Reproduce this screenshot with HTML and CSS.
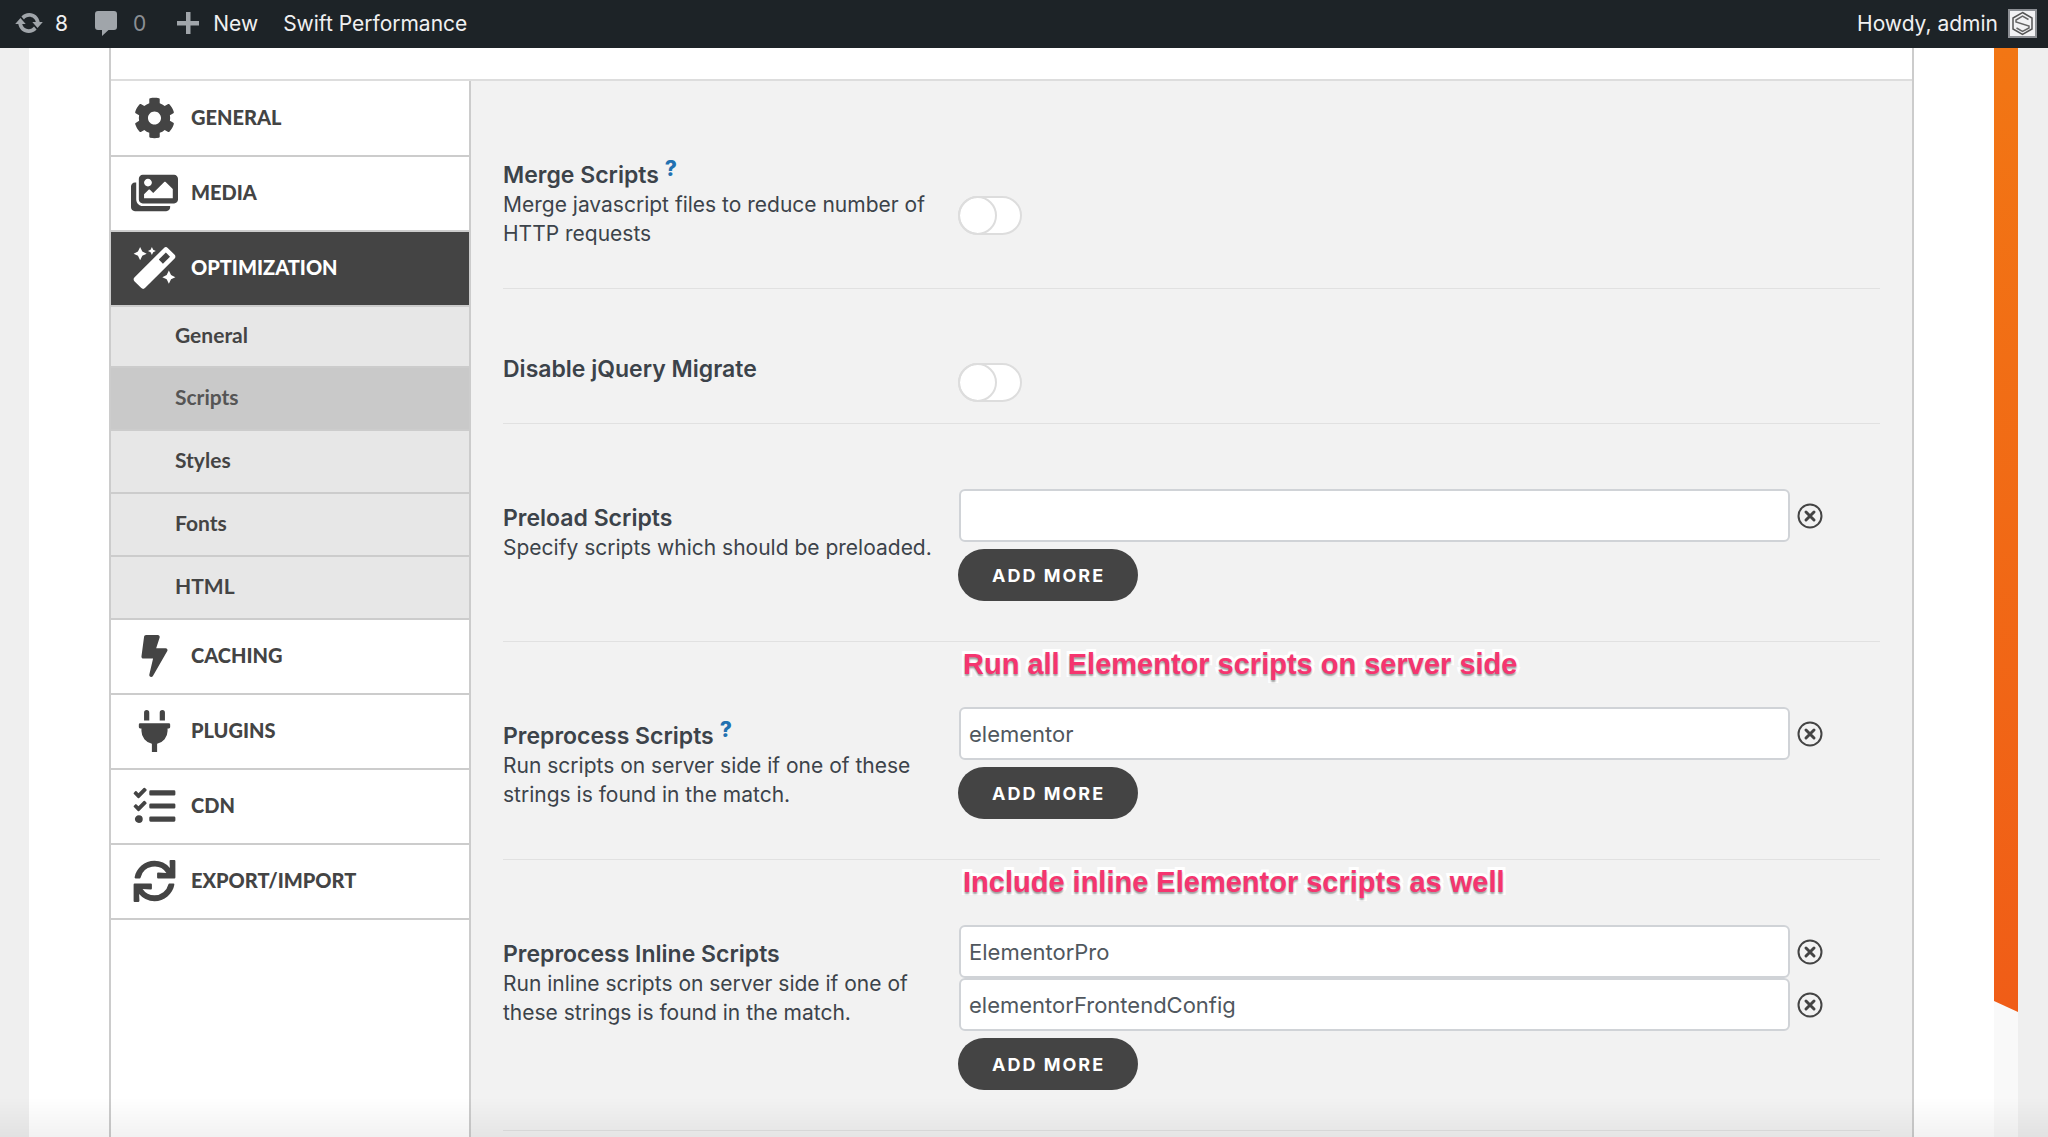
FILE: index.html
```html
<!DOCTYPE html>
<html lang="en">
<head>
    <meta charset="UTF-8">
    <meta name="viewport" content="width=device-width, initial-scale=1.0">
    <title>Swift Performance</title>
    <link rel="stylesheet" href="styles.css">
</head>
<body>
    <header class="adminbar">
        <a href="#" class="ab-item">
            <svg class="ab-icon" width="30" height="30" viewBox="0 0 20 20"><path d="M10.2 3.28c3.53 0 6.43 2.61 6.92 6h2.08l-3.5 4-3.5-4h2.32c-.45-1.97-2.21-3.45-4.32-3.45-1.45 0-2.73.71-3.54 1.78L4.95 5.66C6.23 4.2 8.11 3.28 10.2 3.28zm-.4 13.44c-3.52 0-6.43-2.61-6.92-6H.8l3.5-4c1.17 1.33 2.33 2.67 3.5 4H5.48c.45 1.97 2.21 3.45 4.32 3.45 1.45 0 2.73-.71 3.54-1.78l1.71 1.95c-1.28 1.46-3.15 2.38-5.25 2.38z"/></svg>
            <span>8</span>
        </a>
        <a href="#" class="ab-item ab-comments">
            <svg class="ab-icon" width="22" height="25" viewBox="0 0 22 25"><path d="M3 0h16a3 3 0 0 1 3 3v13a3 3 0 0 1-3 3h-5.500l-6.500 6v-6H3a3 3 0 0 1-3-3V3a3 3 0 0 1 3-3z"/></svg>
            <span>0</span>
        </a>
        <a href="#" class="ab-item ab-new">
            <svg class="ab-icon" width="22" height="22" viewBox="0 0 22 22"><path d="M9 0h4.500v9H22v4.500h-8.500V22H9v-8.500H0V9h9z"/></svg>
            <span>New</span>
        </a>
        <a href="#" class="ab-item">Swift Performance</a>
        <a href="#" class="ab-item ab-account">
            <span>Howdy, admin</span>
            <svg class="avatar" width="29" height="29" viewBox="0 0 29 29">
                <rect x="1" y="1" width="27" height="27" fill="#f2f2f4" stroke="#8c8f94" stroke-width="2"/>
                <path d="M14.500 3.500l9.500 5.500v11l-9.500 5.500L5 20V9z" fill="none" stroke="#555" stroke-width="1.500"/>
                <path d="M20.500 10.500l-6-3.500-6.500 4v2l13 4v2l-6.500 3.500-6-3.500" fill="none" stroke="#666" stroke-width="1.500"/>
            </svg>
        </a>
    </header>

    <div class="wrap">
        <div class="panel">
            <div class="panel-top"></div>
            <div class="panel-body">
                <nav class="sidebar">
                    <a href="#" class="menu-item">
                        <svg viewBox="-32 0 576 512"><path d="M487.400 315.700l-42.600-24.600c4.300-23.200 4.300-47 0-70.200l42.600-24.600c4.900-2.800 7.100-8.600 5.500-14-11.100-35.600-30-67.800-54.700-94.600-3.800-4.100-10-5.100-14.800-2.300L380.800 110c-17.900-15.400-38.500-27.300-60.800-35.100V25.800c0-5.600-3.900-10.500-9.400-11.700-36.700-8.200-74.300-7.800-109.200 0-5.500 1.200-9.400 6.100-9.400 11.700V75c-22.200 7.900-42.800 19.800-60.800 35.100L88.700 85.500c-4.900-2.800-11-1.900-14.800 2.300-24.700 26.700-43.600 58.900-54.700 94.600-1.700 5.400.6 11.200 5.500 14L67.300 221c-4.300 23.200-4.300 47 0 70.200l-42.600 24.600c-4.900 2.800-7.100 8.600-5.500 14 11.100 35.600 30 67.800 54.700 94.600 3.800 4.100 10 5.100 14.800 2.300l42.600-24.600c17.900 15.400 38.500 27.300 60.800 35.100v49.200c0 5.600 3.900 10.500 9.400 11.700 36.700 8.200 74.300 7.800 109.200 0 5.500-1.200 9.400-6.100 9.400-11.700v-49.200c22.200-7.900 42.800-19.800 60.800-35.100l42.600 24.600c4.900 2.800 11 1.900 14.800-2.300 24.700-26.700 43.600-58.900 54.700-94.600 1.500-5.500-.7-11.300-5.600-14.100zM256 336c-44.100 0-80-35.900-80-80s35.900-80 80-80 80 35.900 80 80-35.900 80-80 80z"/></svg>
                        General
                    </a>
                    <a href="#" class="menu-item">
                        <svg viewBox="0 0 576 512"><path d="M480 416v16c0 26.510-21.490 48-48 48H48c-26.510 0-48-21.490-48-48V176c0-26.510 21.490-48 48-48h16v208c0 44.112 35.888 80 80 80h336zm96-80V80c0-26.510-21.490-48-48-48H144c-26.510 0-48 21.490-48 48v256c0 26.510 21.490 48 48 48h384c26.510 0 48-21.490 48-48zM256 128c0 26.510-21.490 48-48 48s-48-21.490-48-48 21.490-48 48-48 48 21.490 48 48zm-96 144l55.515-55.515c4.686-4.686 12.284-4.686 16.971 0L272 256l135.515-135.515c4.686-4.686 12.284-4.686 16.971 0L512 208v112H160v-48z"/></svg>
                        Media
                    </a>
                    <a href="#" class="menu-item active">
                        <svg viewBox="-32 0 576 512"><path d="M224 96l16-32 32-16-32-16-16-32-16 32-32 16 32 16 16 32zM80 160l26.660-53.330L160 80l-53.340-26.670L80 0 53.340 53.330 0 80l53.340 26.670L80 160zm352 128l-26.660 53.330L352 368l53.340 26.670L432 448l26.660-53.330L512 368l-53.340-26.670L432 288zm70.620-193.770L417.770 9.380C411.530 3.120 403.340 0 395.150 0c-8.190 0-16.380 3.120-22.630 9.380L9.380 372.520c-12.500 12.500-12.500 32.760 0 45.250l84.850 84.850c6.250 6.250 14.440 9.370 22.620 9.370 8.190 0 16.380-3.120 22.630-9.370l363.140-363.150c12.500-12.480 12.500-32.750 0-45.240zM359.450 203.460l-50.910-50.910 86.600-86.600 50.910 50.910-86.600 86.600z"/></svg>
                        Optimization
                    </a>
                    <div class="submenu">
                        <a href="#">General</a>
                        <a href="#" class="current">Scripts</a>
                        <a href="#">Styles</a>
                        <a href="#">Fonts</a>
                        <a href="#">HTML</a>
                    </div>
                    <a href="#" class="menu-item">
                        <svg viewBox="-128 0 576 512"><path d="M296 160H180.600l42.600-129.800C227.200 15 215.700 0 200 0H56C44 0 33.800 8.900 32.200 20.800l-32 240C-1.700 275.200 9.500 288 24 288h118.700L96.600 482.500c-3.600 15.200 8 29.500 23.300 29.500 8.400 0 16.400-4.400 20.800-12l176-304c9.300-15.900-2.200-36-20.700-36z"/></svg>
                        Caching
                    </a>
                    <a href="#" class="menu-item">
                        <svg viewBox="-96 0 576 512"><path d="M320 32a32 32 0 0 0-64 0v96h64zm48 128H16A16 16 0 0 0 0 176v32a16 16 0 0 0 16 16h16v32a160.070 160.070 0 0 0 128 156.800V512h64V412.800A160.070 160.070 0 0 0 352 256V224h16a16 16 0 0 0 16-16V176A16 16 0 0 0 368 160zM128 32a32 32 0 0 0-64 0v96h64z"/></svg>
                        Plugins
                    </a>
                    <a href="#" class="menu-item">
                        <svg viewBox="-32 0 576 512"><path d="M139.610 35.500a12 12 0 0 0-17 0L58.930 98.810l-22.700-22.120a12 12 0 0 0-17 0L3.530 92.410a12 12 0 0 0 0 17l47.590 47.400a12.780 12.780 0 0 0 17.610 0l15.590-15.620L156.520 69a12.090 12.090 0 0 0 .09-17zm0 159.190a12 12 0 0 0-17 0l-63.680 63.720-22.700-22.100a12 12 0 0 0-17 0L3.530 252a12 12 0 0 0 0 17L51 316.500a12.770 12.770 0 0 0 17.600 0l15.700-15.690 72.200-72.220a12 12 0 0 0 .09-16.900zM64 368c-26.490 0-48.590 21.500-48.590 48S37.530 464 64 464a48 48 0 0 0 0-96zm432 16H208a16 16 0 0 0-16 16v32a16 16 0 0 0 16 16h288a16 16 0 0 0 16-16v-32a16 16 0 0 0-16-16zm0-320H208a16 16 0 0 0-16 16v32a16 16 0 0 0 16 16h288a16 16 0 0 0 16-16V80a16 16 0 0 0-16-16zm0 160H208a16 16 0 0 0-16 16v32a16 16 0 0 0 16 16h288a16 16 0 0 0 16-16v-32a16 16 0 0 0-16-16z"/></svg>
                        CDN
                    </a>
                    <a href="#" class="menu-item">
                        <svg viewBox="-32 0 576 512"><path d="M440.650 12.570l4 82.770A247.160 247.160 0 0 0 255.830 8C134.730 8 33.910 94.920 12.290 209.820A12 12 0 0 0 24.090 224h49.050a12 12 0 0 0 11.670-9.260 175.910 175.910 0 0 1 317-56.940l-101.460-4.860a12 12 0 0 0-12.570 12v47.410a12 12 0 0 0 12 12H500a12 12 0 0 0 12-12V12a12 12 0 0 0-12-12h-47.370a12 12 0 0 0-11.980 12.570zM255.830 432a175.610 175.610 0 0 1-146-77.800l101.800 4.870a12 12 0 0 0 12.570-12v-47.400a12 12 0 0 0-12-12H12a12 12 0 0 0-12 12V500a12 12 0 0 0 12 12h47.350a12 12 0 0 0 12-12.600l-4.150-82.570A247.170 247.170 0 0 0 255.830 504c121.110 0 221.930-86.920 243.550-201.820a12 12 0 0 0-11.800-14.180h-49.050a12 12 0 0 0-11.670 9.260A175.860 175.860 0 0 1 255.830 432z"/></svg>
                        Export/Import
                    </a>
                </nav>

                <main class="settings">
                    <div class="row">
                        <div class="label">
                            <label for="merge-scripts">Merge Scripts</label> <a href="#" class="help">?</a>
                            <p>Merge javascript files to reduce number of HTTP requests</p>
                        </div>
                        <div class="field">
                            <input type="checkbox" class="toggle" id="merge-scripts">
                        </div>
                    </div>

                    <div class="row compact">
                        <div class="label">
                            <label for="disable-migrate">Disable jQuery Migrate</label>
                        </div>
                        <div class="field">
                            <input type="checkbox" class="toggle" id="disable-migrate">
                        </div>
                    </div>

                    <div class="row">
                        <div class="label">
                            <label for="preload">Preload Scripts</label>
                            <p>Specify scripts which should be preloaded.</p>
                        </div>
                        <div class="field">
                            <div class="entry">
                                <input type="text" id="preload">
                                <button type="button" class="remove" aria-label="Remove"><svg width="26" height="26" viewBox="0 0 26 26"><circle cx="13" cy="13" r="11.500"/><path d="M9 9l8 8M17 9l-8 8"/></svg></button>
                            </div>
                            <button type="button" class="add-more">ADD MORE</button>
                        </div>
                    </div>

                    <div class="row">
                        <div class="note">Run all Elementor scripts on server side</div>
                        <div class="label">
                            <label for="preprocess">Preprocess Scripts</label> <a href="#" class="help">?</a>
                            <p>Run scripts on server side if one of these strings is found in the match.</p>
                        </div>
                        <div class="field">
                            <div class="entry">
                                <input type="text" id="preprocess" value="elementor">
                                <button type="button" class="remove" aria-label="Remove"><svg width="26" height="26" viewBox="0 0 26 26"><circle cx="13" cy="13" r="11.500"/><path d="M9 9l8 8M17 9l-8 8"/></svg></button>
                            </div>
                            <button type="button" class="add-more">ADD MORE</button>
                        </div>
                    </div>

                    <div class="row">
                        <div class="note">Include inline Elementor scripts as well</div>
                        <div class="label">
                            <label for="preprocess-inline">Preprocess Inline Scripts</label>
                            <p>Run inline scripts on server side if one of these strings is found in the match.</p>
                        </div>
                        <div class="field">
                            <div class="entry">
                                <input type="text" id="preprocess-inline" value="ElementorPro">
                                <button type="button" class="remove" aria-label="Remove"><svg width="26" height="26" viewBox="0 0 26 26"><circle cx="13" cy="13" r="11.500"/><path d="M9 9l8 8M17 9l-8 8"/></svg></button>
                            </div>
                            <div class="entry">
                                <input type="text" aria-label="Preprocess Inline Scripts" value="elementorFrontendConfig">
                                <button type="button" class="remove" aria-label="Remove"><svg width="26" height="26" viewBox="0 0 26 26"><circle cx="13" cy="13" r="11.500"/><path d="M9 9l8 8M17 9l-8 8"/></svg></button>
                            </div>
                            <button type="button" class="add-more">ADD MORE</button>
                        </div>
                    </div>
                </main>
            </div>
        </div>
        <div class="stripe"></div>
    </div>
</body>
</html>
```
FILE: styles.css
```css
*,
*::before {
    box-sizing: border-box;
}
body {
    margin: 0;
    min-height: 100vh;
    display: flex;
    flex-direction: column;
    background: #efefef;
    color: #3c434a;
    font-family: Inter, "Liberation Sans", sans-serif;
    font-size: 21px;
    line-height: 29px;
}
a {
    color: inherit;
    text-decoration: none;
}

/* Admin bar */
.adminbar {
    display: flex;
    align-items: center;
    gap: 25px;
    height: 48px;
    padding: 0 11px 2px 14px;
    background: #1d2327;
    color: #f0f0f1;
}
.ab-item {
    display: flex;
    align-items: center;
    gap: 11px;
}
.ab-comments {
    gap: 16px;
    margin-left: 2px;
}
.ab-new {
    gap: 14px;
    margin-left: 6px;
}
.ab-icon {
    fill: #a0a5aa;
}
.ab-comments span {
    color: #8b8f94;
}
.ab-account {
    gap: 10px;
    margin-left: auto;
}

/* Page frame */
.wrap {
    flex: 1;
    display: flex;
    margin: 0 30px 0 29px;
    background: #fff;
}
.panel {
    flex: 1;
    display: flex;
    flex-direction: column;
    margin: 0 80px;
    border: solid #ccc;
    border-width: 0 2px;
}
.panel-top {
    height: 33px;
    border-bottom: 2px solid #ddd;
}
.panel-body {
    flex: 1;
    display: flex;
}
.stripe {
    width: 24px;
    background: #f9f9f9;
}
.stripe::before {
    content: "";
    display: block;
    height: 964px;
    background: linear-gradient(#f27614, #f05d17);
    clip-path: polygon(0 0, 100% 0, 100% 100%, 0 953px);
}

/* Sidebar */
.sidebar {
    width: 360px;
    padding-top: 1px;
    border-right: 2px solid #ccc;
    background: #fff;
    color: #444;
    font-family: Lato, "Liberation Sans", sans-serif;
}
.menu-item {
    display: flex;
    align-items: center;
    gap: 13px;
    height: 75px;
    padding: 0 0 2px 20px;
    border-bottom: 2px solid #ccc;
    font-size: 20px;
    font-weight: 900;
    text-transform: uppercase;
}
.menu-item svg {
    width: 47px;
    height: 42px;
    fill: currentColor;
}
.menu-item.active {
    background: #444;
    color: #fff;
}
.submenu a {
    display: flex;
    align-items: center;
    height: 63px;
    padding: 0 0 4px 64px;
    background: #e7e7e7;
    border-bottom: 2px solid #ccc;
    font-weight: 700;
}
.submenu a:first-child {
    height: 61px;
}
.submenu .current {
    background: #c9c9c9;
    color: #555;
}

/* Settings */
.settings {
    flex: 1;
    padding: 0 32px;
    background: #f2f2f2;
}
.row {
    position: relative;
    display: grid;
    grid-template-columns: 455px 1fr;
    padding: 65px 0 40px;
    border-bottom: 1px solid #e1e1e1;
}
.row.compact {
    padding: 51px 0 21px;
}
.label {
    padding: 15px 20px 0 0;
}
.label label {
    font-size: 23px;
    font-weight: 600;
}
.label p {
    margin: 0;
}
.help {
    color: #2271b1;
    font-weight: 800;
    line-height: 0;
    vertical-align: 7px;
}
.field {
    padding-right: 57px;
}
.toggle {
    appearance: none;
    display: block;
    width: 64px;
    height: 39px;
    margin: 50px 0 0;
    border: 2px solid #ddd;
    border-radius: 20px;
    background: #fff;
}
.toggle::before {
    content: "";
    display: block;
    width: 39px;
    height: 39px;
    margin: -2px;
    border: 2px solid #ddd;
    border-radius: 50%;
}
.compact .toggle {
    margin-top: 23px;
}
.entry {
    display: flex;
    align-items: center;
    gap: 7px;
    padding-left: 1px;
}
.entry input {
    flex: 1;
    height: 53px;
    padding: 0 8px;
    border: 2px solid #d0d3d7;
    border-radius: 6px;
    background: #fff;
    color: #50575e;
    font-family: inherit;
    font-size: 22px;
}
.remove {
    display: block;
    padding: 0;
    border: 0;
    background: none;
}
.remove svg {
    display: block;
    fill: none;
    stroke: #444;
    stroke-width: 2;
}
.remove path {
    stroke-width: 3;
    stroke-linecap: round;
}
.add-more {
    display: block;
    height: 52px;
    margin-top: 7px;
    padding: 0 33px 0 34px;
    border: 0;
    border-radius: 26px;
    background: #444;
    color: #fff;
    font-family: inherit;
    font-size: 18px;
    font-weight: 700;
    letter-spacing: 2px;
}
.note {
    position: absolute;
    top: 5px;
    left: 460px;
    color: #f5356f;
    font: bold 29px/34px "Liberation Sans", Arial, sans-serif;
    -webkit-text-stroke: 6px #fff;
    paint-order: stroke fill;
    text-shadow: 0 2px 2px #999;
}

/* Soft shade along the bottom edge of the window */
body::after {
    content: "";
    position: fixed;
    right: 0;
    bottom: 0;
    left: 0;
    height: 40px;
    background: linear-gradient(transparent, rgba(0, 0, 0, 0.05));
    pointer-events: none;
}
```
